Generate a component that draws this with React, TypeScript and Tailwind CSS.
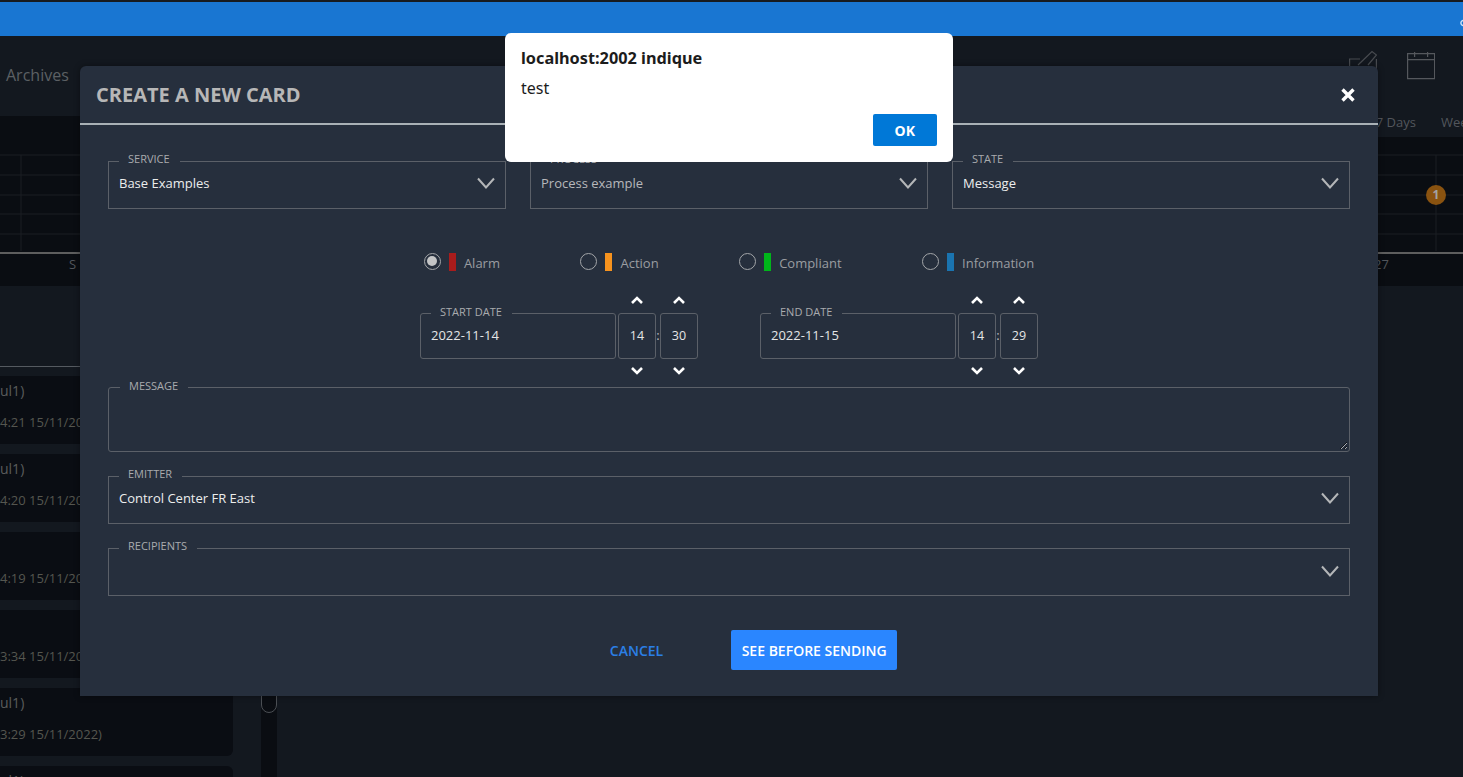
const font = "font-['Open_Sans',sans-serif]";
const legendLabel = "pl-[9px] pr-[10px] text-[11px] leading-[14px] text-[#a9abae] uppercase";

function Chevron() {
  return (
    <svg viewBox="0 0 18 12" className="h-3 w-[18px] shrink-0" fill="none" stroke="#b4b6b8" strokeWidth="2">
      <path d="M1 1.5 9 10.5 17 1.5" />
    </svg>
  );
}

function SmallArrow({ up }: { up?: boolean }) {
  return (
    <svg viewBox="0 0 12 8" className="h-2 w-3" fill="none" stroke="#ffffff" strokeWidth="2.6">
      <path d={up ? "M1 7 6 2 11 7" : "M1 1 6 6 11 1"} />
    </svg>
  );
}

function Field({
  label,
  value,
  dim,
  className = "",
}: {
  label: string;
  value?: string;
  dim?: boolean;
  className?: string;
}) {
  return (
    <fieldset className={`border border-[#5b6068] h-[57px] min-w-0 px-[10px] ${className}`}>
      <legend className={`${legendLabel} pb-[4px]`}>{label}</legend>
      <div className="flex items-center justify-between w-full h-[30px] -mt-[2px]">
        <span className={`text-[13px] pt-[1px] ${dim ? "text-[#b6b8bb]" : "text-[#eceded]"}`}>{value}</span>
        <Chevron />
      </div>
    </fieldset>
  );
}

function Severity({ label, color, checked }: { label: string; color: string; checked?: boolean }) {
  return (
    <div className="flex items-center">
      <span className="w-[17px] h-[17px] rounded-full border-[1.5px] border-[#a3a6a9] flex items-center justify-center -mt-[2px]">
        {checked && <span className="w-[10px] h-[10px] rounded-full bg-[#c4c5c6]" />}
      </span>
      <span className={`w-[7px] h-[18px] ml-2 ${color}`} />
      <span className="ml-2 text-[13px] text-[#9a9da1] mt-[3px]">{label}</span>
    </div>
  );
}

function TimeBox({ value }: { value: string }) {
  return (
    <div className="w-[38px] flex flex-col items-center">
      <div className="h-[20px] flex items-center">
        <SmallArrow up />
      </div>
      <div className="w-full h-[46px] border border-[#5b6068] rounded-[3px] flex items-center justify-center text-[12.5px] text-[#e4e5e6] mt-[3px]">
        {value}
      </div>
      <div className="h-[20px] flex items-center pt-[4px]">
        <SmallArrow />
      </div>
    </div>
  );
}

function DateTime({ label, date, hour, minute }: { label: string; date: string; hour: string; minute: string }) {
  return (
    <div className="flex items-start">
      <fieldset className="w-[196px] h-[54px] border border-[#5b6068] rounded-[3px] pl-[10px] mt-[15px]">
        <legend className={`${legendLabel} pb-[2px]`}>{label}</legend>
        <div className="text-[13px] text-[#e4e5e6] -mt-[1px] leading-[30px]">{date}</div>
      </fieldset>
      <div className="ml-[2px]">
        <TimeBox value={hour} />
      </div>
      <span className="w-[4px] h-[46px] mt-[23px] flex items-center justify-center text-[13px] text-[#b9bbbe]">:</span>
      <TimeBox value={minute} />
    </div>
  );
}

function Card({ top, bottom }: { top?: string; bottom: string }) {
  return (
    <div className="h-[68px] w-[233px] bg-[#0a0d13] rounded-r-[6px] shrink-0 text-[#55564f] overflow-hidden">
      <div className="h-[34px] pt-[4px] text-[14px] text-[#5a5c5c] whitespace-nowrap">{top}</div>
      <div className="pt-[3px] text-[13px] whitespace-nowrap">{bottom}</div>
    </div>
  );
}

function Background() {
  return (
    <div className="absolute inset-0 flex flex-col bg-[#13181f]">
      <div className="h-[2px] bg-[#171b20]" />
      <div className="h-[34px] bg-[#1976d2] flex justify-end items-center">
        <svg viewBox="0 0 3 8" className="w-[3px] h-[8px] mt-[7px]" fill="none" stroke="#cfe3f7" strokeWidth="1.4">
          <circle cx="3.5" cy="4" r="2.6" />
        </svg>
      </div>

      <div className="h-[80px] bg-[#13181f] flex items-start justify-between">
        <span className="ml-[6px] mt-[27px] text-[16px] text-[#5c6064]">Archives</span>
        <div className="flex items-start gap-[30px] mr-[28px] mt-[14px]">
          <svg viewBox="0 0 28 30" className="w-[28px] h-[30px]" fill="none" stroke="#484b50" strokeWidth="1.2">
            <path d="M11 9H.6V30M27.4 9V30" />
            <path d="M9 15 23 1.6 27.5 5 19 15" />
          </svg>
          <svg viewBox="0 0 28 28" className="w-[28px] h-[28px] mt-[2px]" fill="none" stroke="#55585d" strokeWidth="1.2">
            <path d="M.6 1.6h27v25h-27zM.6 7.6h27M7.6 0v5M20.6 0v5" />
          </svg>
        </div>
      </div>

      <div className="h-[21px] flex">
        <div className="w-[100px] bg-[#0a0d12]" />
        <div className="flex-1 flex justify-end gap-[25px] text-[13px] text-[#52565c] leading-[13px] whitespace-nowrap overflow-hidden">
          <span>7 Days</span>
          <span className="w-[22px] overflow-hidden">Week</span>
        </div>
      </div>

      <div className="h-[149px] bg-[#0a0d12] relative">
        <svg viewBox="0 0 1463 149" className="w-full h-[149px]">
          {[18, 38, 58, 77, 97].map((y) => (
            <line key={y} x1="0" x2="1463" y1={y} y2={y} stroke="#1b1e23" />
          ))}
          {[21, 1436].map((x) => (
            <line key={x} x1={x} x2={x} y1="18" y2="114" stroke="#1b1e23" />
          ))}
          <line x1="0" x2="1463" y1="116" y2="116" stroke="#5e5e5e" strokeWidth="2" />
        </svg>
        <span className="absolute left-[1426px] top-[48px] w-5 h-5 rounded-full bg-[#8a5310] text-[#a3a3a3] text-[12px] font-bold flex items-center justify-center">1</span>
        <span className="absolute left-[69px] top-[118px] text-[13px] text-[#52565c]">S</span>
        <span className="absolute left-[1374px] top-[118px] text-[13px] text-[#52565c]">27</span>
      </div>

      <div className="flex flex-1 min-h-0">
        <div className="w-[261px] pt-[80px] flex flex-col">
          <div className="h-[1px] w-[233px] bg-[#555a60] mb-[9px] shrink-0" />
          <div className="flex flex-col gap-[10px]">
            <Card top="ul1)" bottom="4:21 15/11/2022)" />
            <Card top="ul1)" bottom="4:20 15/11/2022)" />
            <Card bottom="4:19 15/11/2022)" />
            <Card bottom="3:34 15/11/2022)" />
            <Card top="ul1)" bottom="3:29 15/11/2022)" />
            <Card top="ul1)" bottom="" />
          </div>
        </div>
        <div className="w-4 mt-[90px] bg-[#0a0d12]">
          <div className="h-[337px] border border-[#4b4f54] rounded-b-full" />
        </div>
      </div>
    </div>
  );
}

function CardDialog() {
  return (
    <div className="absolute left-[80px] top-[66px] w-[1298px] h-[630px] bg-[#262f3d] rounded-t-[6px] shadow-[0_0_6px_rgba(0,0,0,0.4)]">
      <div className="h-[59px] border-b-2 border-[#a9b1b6] flex items-center justify-between pl-4 pr-[23px]">
        <h2 className="text-[20px] font-bold text-[#b7b7b7]">CREATE A NEW CARD</h2>
        <svg viewBox="0 0 14 14" className="w-[14px] h-[14px]" fill="none" stroke="#ffffff" strokeWidth="3.4">
          <path d="M1.5 1.5l11 11M12.5 1.5l-11 11" />
        </svg>
      </div>

      <div className="px-[28px] pt-[27px] flex flex-col">
        <div className="grid grid-cols-3 gap-[24px]">
          <Field label="Service" value="Base Examples" />
          <Field label="Process" value="Process example" dim />
          <Field label="State" value="Message" />
        </div>

        <div className="flex justify-center gap-[80.5px] mt-[44px] h-[18px]">
          <Severity label="Alarm" color="bg-[#a81c1c]" checked />
          <Severity label="Action" color="bg-[#f7931e]" />
          <Severity label="Compliant" color="bg-[#00b51a]" />
          <Severity label="Information" color="bg-[#1a74b0]" />
        </div>

        <div className="flex justify-center gap-[62px] mt-[19px] h-[89px]">
          <DateTime label="Start date" date="2022-11-14" hour="14" minute="30" />
          <DateTime label="End date" date="2022-11-15" hour="14" minute="29" />
        </div>

        <fieldset className="border border-[#5b6068] rounded-[3px] h-[73px] px-[1px]">
          <legend className={`${legendLabel} ml-[10px] pb-[2px]`}>Message</legend>
          <textarea className="block w-full h-[55px] bg-transparent outline-none text-[13px] text-[#e4e5e6]" />
        </fieldset>

        <Field label="Emitter" value="Control Center FR East" className="mt-[15px]" />

        <fieldset className="border border-[#5b6068] h-[57px] min-w-0 mt-[15px] px-[10px]">
          <legend className={`${legendLabel} pb-[4px]`}>Recipients</legend>
          <div className="flex items-center justify-end h-[30px] -mt-[1px]">
            <Chevron />
          </div>
        </fieldset>

        <div className="flex justify-center items-center gap-[68px] mt-[34px] pl-[49px]">
          <span className="text-[14px] font-semibold text-[#2b7fe6]">CANCEL</span>
          <button className="w-[166px] h-[40px] bg-[#2a86ff] rounded-[2px] text-[14px] font-semibold text-white">SEE BEFORE SENDING</button>
        </div>
      </div>
    </div>
  );
}

function BrowserAlert() {
  return (
    <div className="absolute left-[505px] top-[33px] w-[448px] h-[129px] bg-white rounded-[6px] px-4 pt-[13px] font-['Noto_Sans',sans-serif] text-[#1c1c1c] flex flex-col">
      <div className="text-[16.3px] font-bold leading-[24px]">localhost:2002 indique</div>
      <div className="text-[16px] leading-[22px] mt-[7px]">test</div>
      <div className="flex justify-end mt-[15px]">
        <button className="w-[64px] h-[32px] bg-[#0078d7] rounded-[2px] text-white text-[14px] font-bold tracking-[0.3px]">OK</button>
      </div>
    </div>
  );
}

export default function App() {
  return (
    <div className={`relative w-[1463px] h-[777px] overflow-hidden ${font}`}>
      <Background />
      <CardDialog />
      <BrowserAlert />
    </div>
  );
}
